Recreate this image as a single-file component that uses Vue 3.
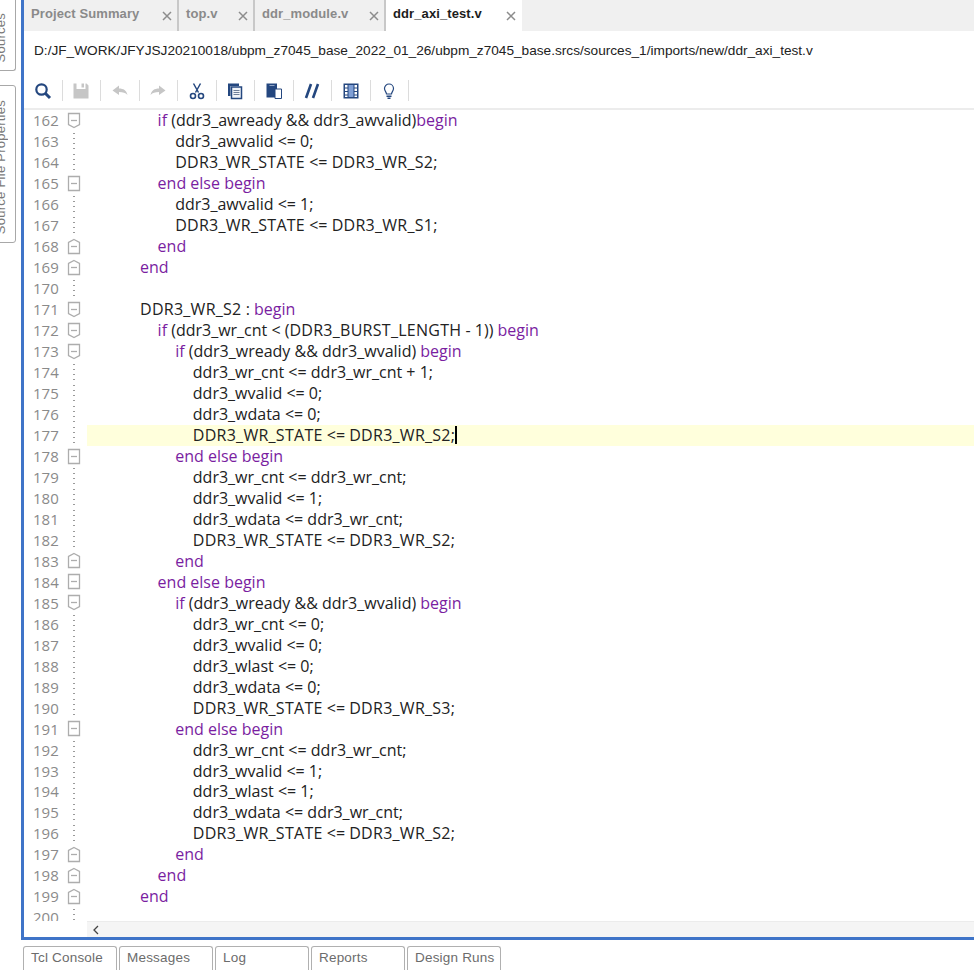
<script setup>
const tabs = [
  { name: 'Project Summary', width: 155 },
  { name: 'top.v', width: 76 },
  { name: 'ddr_module.v', width: 131 },
  { name: 'ddr_axi_test.v', width: 136, active: true }
]

const bottomTabs = ['Tcl Console', 'Messages', 'Log', 'Reports', 'Design Runs']

// level = indent step, fold = gutter marker
const source = [
  [162, 1, 'if (ddr3_awready && ddr3_awvalid)begin', 'open'],
  [163, 2, 'ddr3_awvalid <= 0;'],
  [164, 2, 'DDR3_WR_STATE <= DDR3_WR_S2;'],
  [165, 1, 'end else begin', 'mid'],
  [166, 2, 'ddr3_awvalid <= 1;'],
  [167, 2, 'DDR3_WR_STATE <= DDR3_WR_S1;'],
  [168, 1, 'end', 'close'],
  [169, 0, 'end', 'close'],
  [170, 0, ''],
  [171, 0, 'DDR3_WR_S2 : begin', 'open'],
  [172, 1, 'if (ddr3_wr_cnt < (DDR3_BURST_LENGTH - 1)) begin', 'open'],
  [173, 2, 'if (ddr3_wready && ddr3_wvalid) begin', 'open'],
  [174, 3, 'ddr3_wr_cnt <= ddr3_wr_cnt + 1;'],
  [175, 3, 'ddr3_wvalid <= 0;'],
  [176, 3, 'ddr3_wdata <= 0;'],
  [177, 3, 'DDR3_WR_STATE <= DDR3_WR_S2;'],
  [178, 2, 'end else begin', 'mid'],
  [179, 3, 'ddr3_wr_cnt <= ddr3_wr_cnt;'],
  [180, 3, 'ddr3_wvalid <= 1;'],
  [181, 3, 'ddr3_wdata <= ddr3_wr_cnt;'],
  [182, 3, 'DDR3_WR_STATE <= DDR3_WR_S2;'],
  [183, 2, 'end', 'close'],
  [184, 1, 'end else begin', 'mid'],
  [185, 2, 'if (ddr3_wready && ddr3_wvalid) begin', 'open'],
  [186, 3, 'ddr3_wr_cnt <= 0;'],
  [187, 3, 'ddr3_wvalid <= 0;'],
  [188, 3, 'ddr3_wlast <= 0;'],
  [189, 3, 'ddr3_wdata <= 0;'],
  [190, 3, 'DDR3_WR_STATE <= DDR3_WR_S3;'],
  [191, 2, 'end else begin', 'mid'],
  [192, 3, 'ddr3_wr_cnt <= ddr3_wr_cnt;'],
  [193, 3, 'ddr3_wvalid <= 1;'],
  [194, 3, 'ddr3_wlast <= 1;'],
  [195, 3, 'ddr3_wdata <= ddr3_wr_cnt;'],
  [196, 3, 'DDR3_WR_STATE <= DDR3_WR_S2;'],
  [197, 2, 'end', 'close'],
  [198, 1, 'end', 'close'],
  [199, 0, 'end', 'close'],
  [200, 0, '']
]

// keywords are purple, upper case names set a little wider
function tokens(text) {
  return text.split(/\b(if|else|begin|end|[A-Z][A-Z0-9_]+)\b/).map((part, i) => ({
    part,
    kw: i % 2 === 1 && /^[a-z]/.test(part),
    caps: i % 2 === 1 && /^[A-Z]/.test(part)
  }))
}

const lines = source.map(([num, level, text, fold]) => ({
  num,
  fold,
  pad: 53 + level * 17.6,
  parts: tokens(text),
  current: num === 177
}))
</script>

<template>
  <div class="ide">
    <aside class="side">
      <div class="side-tab first"><span>Sources</span></div>
      <div class="side-tab second"><span>Source File Properties</span></div>
    </aside>

    <div class="main">
      <section class="editor">
        <nav class="tabbar">
          <div v-for="tab in tabs" :key="tab.name" class="tab" :class="{ active: tab.active }" :style="{ width: tab.width + 'px' }">
            <span class="tab-name">{{ tab.name }}</span>
            <svg class="tab-x" width="10" height="10" viewBox="0 0 10 10"><path d="M1 1l8 8M9 1l-8 8" /></svg>
          </div>
        </nav>

        <div class="path">D:/JF_WORK/JFYJSJ20210018/ubpm_z7045_base_2022_01_26/ubpm_z7045_base.srcs/sources_1/imports/new/ddr_axi_test.v</div>

        <div class="toolbar">
          <div class="tool">
            <svg width="18" height="18" viewBox="0 0 18 18"><circle cx="7.5" cy="7.5" r="5.2" fill="none" stroke="#24477f" stroke-width="2.2" /><path d="M11 11l5 5" stroke="#24477f" stroke-width="3" /></svg>
          </div>
          <div class="tool">
            <svg width="18" height="18" viewBox="0 0 18 18"><path fill="#c6c6c6" d="M1.500 1.500h3v5.500h9V1.500h1l2 2V16.500h-15z" /><path fill="#c6c6c6" d="M9.500 1.500h2.500v4H9.500z" /></svg>
          </div>
          <div class="tool">
            <svg width="18" height="18" viewBox="0 0 18 18"><path fill="#c6c6c6" d="M1.500 8.500L8 3.500v3c4.500 0 7.500 2 8.500 6.500-2-2.300-4.500-3-8.500-3v3z" /></svg>
          </div>
          <div class="tool">
            <svg width="18" height="18" viewBox="0 0 18 18"><path fill="#c6c6c6" d="M16.500 8.500L10 3.500v3c-4.500 0-7.500 2-8.500 6.500 2-2.300 4.500-3 8.500-3v3z" /></svg>
          </div>
          <div class="tool">
            <svg width="18" height="18" viewBox="0 0 18 18"><g fill="none" stroke="#24477f"><path stroke-width="1.500" d="M5.500 1.500l5 9M12.500 1.500l-5 9" /><circle cx="5" cy="14" r="2.500" stroke-width="1.600" /><circle cx="13" cy="14" r="2.500" stroke-width="1.600" /></g></svg>
          </div>
          <div class="tool">
            <svg width="18" height="18" viewBox="0 0 18 18"><path fill="#24477f" d="M2 1.500h11v2.500H4.500v10H2z" /><path fill="#f2f4f8" stroke="#24477f" stroke-width="1.500" d="M5.500 5h10v11.500h-10z" /><path stroke="#6f7f99" d="M7.500 8.500h6M7.500 10.500h6M7.500 12.500h6" /></svg>
          </div>
          <div class="tool">
            <svg width="18" height="18" viewBox="0 0 18 18"><path fill="#24477f" d="M1.500 1.500h10.500v14H1.500z" /><path fill="#8fa3c4" d="M4.500 3h5v1H4.500z" /><path fill="#fff" stroke="#24477f" d="M10 7h6.500v9.500H10z" /></svg>
          </div>
          <div class="tool">
            <svg width="18" height="18" viewBox="0 0 18 18"><path stroke="#24477f" stroke-width="2.600" d="M8 2L3 16M15 2l-5 14" /></svg>
          </div>
          <div class="tool">
            <svg width="18" height="18" viewBox="0 0 18 18"><path fill="#24477f" d="M1.500 1.500h15v15h-15z" /><path fill="#fff" d="M3 3h2.500v2.500H3zM3 6.500h2.500V9H3zM3 10h2.500v2.500H3zM3 13.500h2.500V15H3zM12.500 3H15v2.500h-2.500zM12.500 6.500H15V9h-2.500zM12.500 10H15v2.500h-2.500zM12.500 13.500H15V15h-2.500z" /><path fill="#7f9fd6" d="M6.500 3h5v12h-5z" /></svg>
          </div>
          <div class="tool">
            <svg width="18" height="18" viewBox="0 0 18 18"><g fill="none" stroke="#24477f" stroke-width="1.200"><path d="M6.500 12c0-2-2-3-2-5.500a4.500 4.500 0 0 1 9 0c0 2.500-2 3.500-2 5.500z" /><path stroke-width="1.600" d="M6.500 14.300h5M7.500 16.300h3" /></g></svg>
          </div>
        </div>

        <div class="code">
          <div v-for="line in lines" :key="line.num" class="row">
            <span class="num">{{ line.num }}</span>
            <span class="gutter">
              <svg v-if="line.fold" class="fold" width="14" height="17" viewBox="0 0 14 17">
                <path v-if="line.fold === 'open'" d="M1.500 1.500h11v11L7 15.500l-5.500-3z" />
                <path v-else-if="line.fold === 'close'" d="M7 1.500l5.500 3v11h-11v-11z" />
                <path v-else d="M1.500 1.500h11v14h-11z" />
                <path d="M4 8.500h6" />
              </svg>
            </span>
            <span class="text" :class="{ current: line.current }" :style="{ paddingLeft: line.pad + 'px' }"><span
              v-for="(t, i) in line.parts" :key="i" :class="{ kw: t.kw, caps: t.caps }">{{ t.part }}</span><i v-if="line.current" class="caret"></i></span>
          </div>
        </div>

        <div class="hscroll">
          <svg width="8" height="10" viewBox="0 0 8 10"><path d="M6 1L2 5l4 4" fill="none" stroke="#444" stroke-width="1.300" /></svg>
        </div>
      </section>

      <footer class="bottom">
        <div v-for="name in bottomTabs" :key="name" class="bottom-tab">{{ name }}</div>
      </footer>
    </div>
  </div>
</template>

<style scoped>
.ide {
  display: flex;
  width: 974px;
  height: 970px;
  overflow: hidden;
  background: #fff;
  font-family: "Liberation Sans", Arial, sans-serif;
}

.side {
  width: 21px;
  flex: none;
  overflow: hidden;
  display: flex;
  flex-direction: column;
}

.side-tab {
  width: 17px;
  margin-left: -1px;
  border: 1px solid #a8a8a8;
  border-radius: 0 0 3px 0;
  box-sizing: border-box;
  display: flex;
  align-items: flex-end;
  justify-content: flex-start;
  overflow: hidden;
  color: #7a7a7a;
  font-size: 13px;
}

.side-tab span {
  writing-mode: vertical-rl;
  transform: rotate(180deg);
  white-space: nowrap;
  margin-left: -7px;
  margin-bottom: 8px;
  letter-spacing: 0.25px;
}

.side-tab.first {
  height: 71px;
  border-top: none;
}

.side-tab.second {
  height: 158px;
  margin-top: 14px;
  border-radius: 0 3px 3px 0;
}

.main {
  flex: 1;
  min-width: 0;
  display: flex;
  flex-direction: column;
}

.editor {
  height: 940px;
  flex: none;
  box-sizing: border-box;
  border-left: 3px solid #3f74c8;
  border-bottom: 3px solid #3f74c8;
  display: flex;
  flex-direction: column;
  overflow: hidden;
}

.tabbar {
  height: 31px;
  flex: none;
  display: flex;
  background: #f0f0f0;
}

.tab {
  box-sizing: border-box;
  flex: none;
  display: flex;
  align-items: center;
  justify-content: space-between;
  padding: 0 5px 5px 7px;
  border-right: 2px solid #c8c8c8;
  font-size: 13px;
  font-weight: bold;
  color: #8a8a8a;
}

.tab-name {
  letter-spacing: 0.1px;
}

.tab-x {
  margin-top: 5px;
  fill: none;
  stroke: #8c8c8c;
  stroke-width: 1.500;
}

.tab.active {
  background: #fff;
  color: #1c1c1c;
  border-right: none;
  padding: 0 6px 5px 7px;
}

.path {
  height: 47px;
  flex: none;
  box-sizing: border-box;
  padding: 13px 0 0 10px;
  font-size: 13.65px;
  line-height: 14px;
  color: #222;
  white-space: nowrap;
}

.toolbar {
  height: 32px;
  flex: none;
  box-sizing: border-box;
  display: flex;
  padding-top: 2px;
  border-bottom: 2px solid #ececec;
}

.tool {
  width: 38.500px;
  height: 21px;
  flex: none;
  display: flex;
  align-items: center;
  justify-content: center;
  border-right: 1px solid #dcdcdc;
  box-sizing: border-box;
}

.code {
  flex: 1;
  min-height: 0;
  overflow: hidden;
}

.row {
  height: 20.970px;
  display: flex;
  align-items: center;
  font-family: "Open Sans", "Noto Sans", sans-serif;
  font-size: 16px;
  color: #222;
  white-space: pre;
}

.caps {
  letter-spacing: 0.27px;
}

.num {
  width: 36px;
  flex: none;
  box-sizing: border-box;
  padding-left: 9px;
  font-size: 15px;
  color: #8a8a8a;
}

.gutter {
  width: 27px;
  flex: none;
  align-self: stretch;
  position: relative;
  background: radial-gradient(circle, #9a9a9a 0.7px, transparent 1px) 13px 0 / 2px 5px repeat-y;
}

.fold {
  position: absolute;
  left: 7px;
  top: 2px;
  background: #fff;
  fill: #fff;
  stroke: #adadad;
  stroke-width: 1.300;
}

.text {
  flex: 1;
  align-self: stretch;
  display: flex;
  align-items: center;
}

.text.current {
  background: #ffffdc;
}

.kw {
  color: #7a1ea1;
}

.caret {
  width: 2px;
  height: 18px;
  background: #000;
}

.hscroll {
  height: 15px;
  flex: none;
  margin-left: 63px;
  background: #f5f5f5;
  border-top: 1px solid #ececec;
  display: flex;
  align-items: center;
  padding-left: 5px;
}

.bottom {
  flex: none;
  display: flex;
  gap: 2px;
  padding: 6px 0 0 2px;
}

.bottom-tab {
  width: 94px;
  height: 30px;
  box-sizing: border-box;
  padding: 3px 0 0 7px;
  border: 1px solid #b0b0b0;
  border-bottom: none;
  border-radius: 3px 3px 0 0;
  font-size: 13.5px;
  line-height: 15px;
  color: #6c6c6c;
  letter-spacing: 0.2px;
}
</style>
